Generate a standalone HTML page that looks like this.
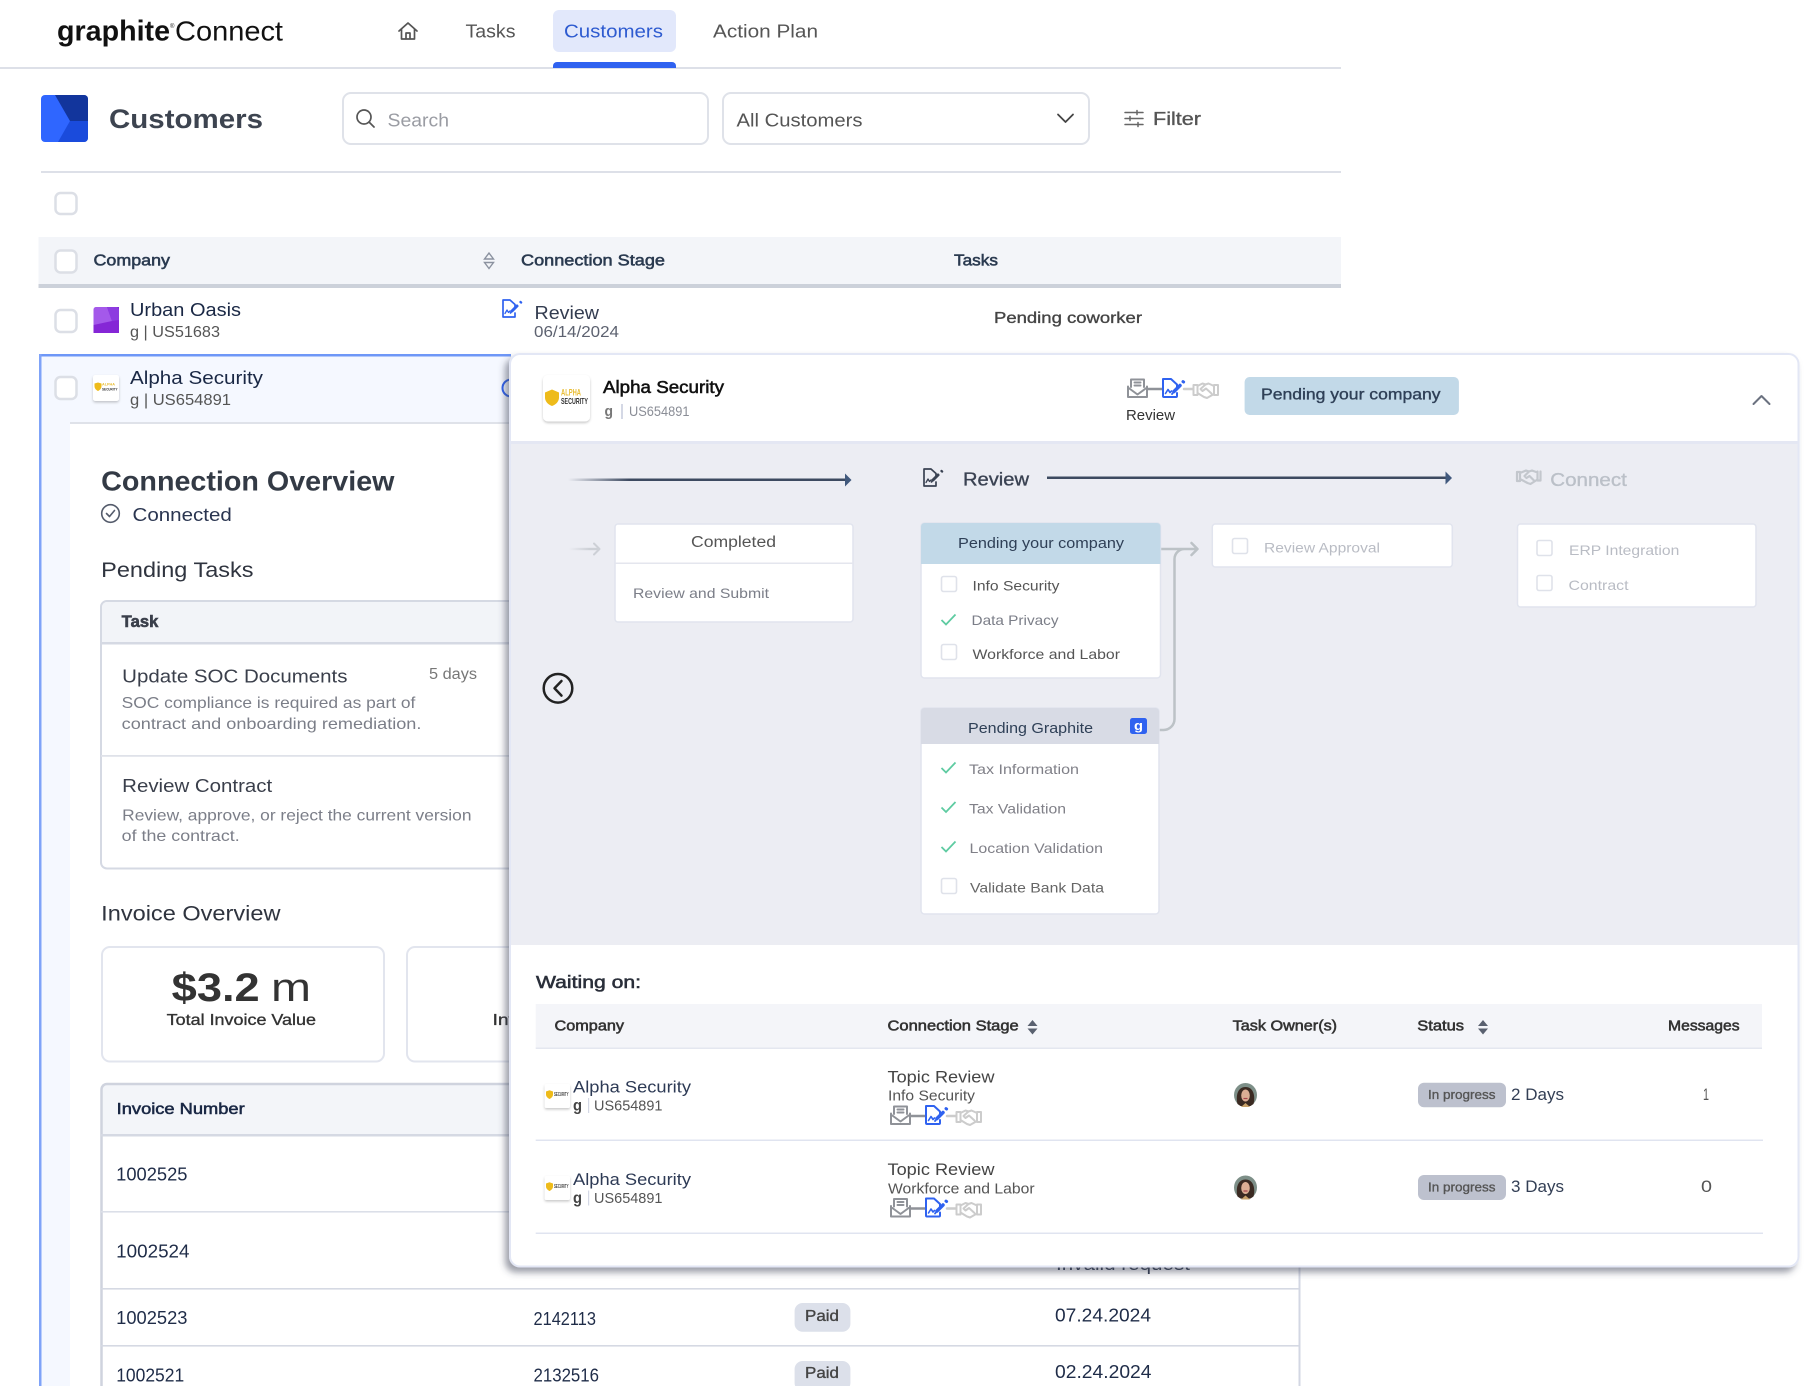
<!DOCTYPE html>
<html><head><meta charset="utf-8"><title>Customers</title>
<style>
html,body{margin:0;padding:0;background:#fff}
svg{display:block}
text{fill:currentColor;font-family:"Liberation Sans",sans-serif}
.m{stroke:currentColor;stroke-width:.35px}
.s{stroke:currentColor;stroke-width:.55px}
.cb{fill:#fff;stroke:#dfe2ea;stroke-width:1.6}
.ck{fill:none;stroke:#5ecba1;stroke-width:1.8}
.ln{fill:none;stroke-linecap:round;stroke-linejoin:round}
</style></head><body>
<svg width="1815" height="1386" viewBox="0 0 1815 1386" xmlns="http://www.w3.org/2000/svg">
<defs>
<linearGradient id="g1" x1="0" x2="1" y1="0" y2="0"><stop offset="0" stop-color="#3d4a60" stop-opacity="0"/><stop offset=".22" stop-color="#3d4a60"/><stop offset="1" stop-color="#3d4a60"/></linearGradient>
<linearGradient id="g2" x1="0" x2="1" y1="0" y2="0"><stop offset="0" stop-color="#cdd0d6" stop-opacity="0"/><stop offset=".7" stop-color="#cdd0d6"/></linearGradient>
<filter id="sh" x="-5%" y="-5%" width="110%" height="110%"><feDropShadow dx="-4" dy="5" stdDeviation="3.5" flood-color="#3a4255" flood-opacity=".5"/></filter>
<filter id="cs" x="-30%" y="-30%" width="160%" height="160%"><feDropShadow dx="0" dy="1.5" stdDeviation="1.2" flood-color="#000" flood-opacity=".22"/></filter>
</defs>
<rect width="1815" height="1386" fill="#fff"/>

<!-- NAV -->
<text x="57" y="40.5" font-size="29" font-weight="700" color="#111" textLength="113" lengthAdjust="spacingAndGlyphs">graphite</text>
<text x="170" y="28" font-size="6" color="#222">®</text>
<text x="175" y="40.5" font-size="28" color="#111" textLength="108" lengthAdjust="spacingAndGlyphs">Connect</text>
<g class="ln" stroke="#555" stroke-width="1.7" transform="translate(398,22)"><path d="M1 9 10 1l9 8M3.5 7v10h13V7M8 17v-6h4v6"/></g>
<text x="465.5" y="37.5" font-size="18.5" color="#555" textLength="50" lengthAdjust="spacingAndGlyphs">Tasks</text>
<rect x="553" y="10" width="123" height="42" rx="6" fill="#e2e8fb"/>
<text x="564" y="37.5" font-size="18.5" color="#2e5bd0" textLength="99" lengthAdjust="spacingAndGlyphs">Customers</text>
<text x="713" y="37.5" font-size="18.5" color="#555" textLength="105" lengthAdjust="spacingAndGlyphs">Action Plan</text>
<rect x="0" y="67" width="1341" height="2" fill="#dde0e8"/>
<path d="M553 68v-2a4 4 0 0 1 4-4h115a4 4 0 0 1 4 4v2z" fill="#2f62f0"/>

<!-- Title -->
<rect x="41" y="95" width="47" height="47" rx="4" fill="#2f66ff"/>
<path d="M55 95h29a4 4 0 0 1 4 4v22H70z" fill="#12359c"/>
<path d="M70 121h18v17a4 4 0 0 1-4 4H58z" fill="#1a4bdc"/>
<text x="109" y="128" font-size="27" font-weight="700" color="#3d4450" textLength="154" lengthAdjust="spacingAndGlyphs">Customers</text>
<rect x="343" y="93" width="365" height="51" rx="8" fill="#fff" stroke="#dfe2e9" stroke-width="2"/>
<g class="ln" stroke="#555" stroke-width="1.7"><circle cx="364" cy="117" r="7"/><path d="M369 122l5 5"/></g>
<text x="387.5" y="126.5" font-size="18.5" color="#9a9ca3" textLength="61.5" lengthAdjust="spacingAndGlyphs">Search</text>
<rect x="723" y="93" width="366" height="51" rx="8" fill="#fff" stroke="#dfe2e9" stroke-width="2"/>
<text x="736.500" y="126.5" font-size="18.5" color="#555" textLength="126" lengthAdjust="spacingAndGlyphs">All Customers</text>
<path class="ln" d="M1058 114.500l7.500 7.500 7.500-7.500" stroke="#444" stroke-width="1.8"/>
<g class="ln" stroke="#666" stroke-width="1.5"><path d="M1125 112.500h18M1125 118.500h18M1125 124.500h18"/><path d="M1137 110.500v4M1130 116.500v4M1138 122.500v4"/></g>
<text class="m" x="1153" y="124.800" font-size="18" color="#555" textLength="48" lengthAdjust="spacingAndGlyphs">Filter</text>
<rect x="41" y="171" width="1300" height="2" fill="#dde0e8"/>
<rect x="55.500" y="193" width="21" height="21" rx="5" fill="#fff" stroke="#dcdfe6" stroke-width="2.5"/>

<!-- table header -->
<rect x="38.500" y="237" width="1302.500" height="47" fill="#f3f5f9"/>
<rect x="38.500" y="284" width="1302.500" height="4" fill="#ccd1da"/>
<rect x="55.500" y="250.500" width="21" height="22" rx="5" fill="#fff" stroke="#dcdfe6" stroke-width="2.500"/>
<text class="s" x="93.500" y="265.500" font-size="16" color="#2a3a50" textLength="76.500" lengthAdjust="spacingAndGlyphs">Company</text>
<g fill="none" stroke="#8b92a0" stroke-width="1.400"><path d="M489 253l4.500 6h-9zM489 268.500l4.500-6h-9z"/></g>
<text class="s" x="521" y="265.500" font-size="16" color="#2a3a50" textLength="144" lengthAdjust="spacingAndGlyphs">Connection Stage</text>
<text class="s" x="954" y="265.500" font-size="16" color="#2a3a50" textLength="44" lengthAdjust="spacingAndGlyphs">Tasks</text>

<!-- Urban Oasis -->
<rect x="55.500" y="310" width="21" height="22" rx="5" fill="#fff" stroke="#dcdfe6" stroke-width="2.500"/>
<rect x="93.500" y="307" width="25.500" height="26" rx="2.500" fill="#a459ea"/>
<path d="M107 307h12v14h-7zM93.500 325l18.500-4h7v12H93.500z" fill="#8526d6"/>
<path d="M107 307h10l2 2v11l-7 1z" fill="#8d3ce0"/>
<text x="130" y="316" font-size="18.500" color="#1a2845" textLength="111" lengthAdjust="spacingAndGlyphs">Urban Oasis</text>
<text x="130" y="337" font-size="15.500" color="#555" textLength="90" lengthAdjust="spacingAndGlyphs">g | US51683</text>
<g class="ln" stroke="#2f62f0" stroke-width="1.700" transform="translate(502,299)"><path d="M1 1h7l5 4.500v2M13 14v4H1V1"/><path d="M3 14.500l2-3.500 1.500 2.500 1.500-1.500" stroke-width="1.300"/><path d="M10 12l5-5" stroke-width="3"/><path d="M8.500 14l.8-1"/><path d="M18.500 3l.6.5" stroke-width="2.400"/></g>
<text x="534.500" y="319" font-size="18.500" color="#333c50" textLength="64.500" lengthAdjust="spacingAndGlyphs">Review</text>
<text x="534" y="337" font-size="16" color="#5d6270" textLength="85" lengthAdjust="spacingAndGlyphs">06/14/2024</text>
<text class="m" x="994" y="323" font-size="16" color="#444" textLength="148" lengthAdjust="spacingAndGlyphs">Pending coworker</text>

<!-- Alpha row -->
<rect x="39" y="354" width="472" height="1032" fill="#f5f8ff"/>
<rect x="70" y="423" width="1229" height="963" fill="#fff"/>
<rect x="70" y="422" width="441" height="2" fill="#dfe2e9"/>
<rect x="39" y="354" width="472" height="2.500" fill="#6e97f7"/>
<rect x="39" y="354" width="2.500" height="1032" fill="#7fa3f8"/>
<rect x="55.500" y="377" width="21" height="22" rx="5" fill="#fff" stroke="#dcdfe6" stroke-width="2.500"/>
<rect x="93" y="375" width="26" height="26" rx="2.500" fill="#fff" filter="url(#cs)"/>
<path d="M94.500 383.500l3.500-1 3.500 1v2.500c0 2.500-1.500 4-3.500 5-2-1-3.500-2.500-3.500-5z" fill="#eebb1a"/>
<text x="102" y="385.500" font-size="4" font-weight="700" color="#e9bd33" textLength="13" lengthAdjust="spacingAndGlyphs">ALPHA</text>
<text x="102" y="390.500" font-size="4" font-weight="700" color="#333" textLength="15.500" lengthAdjust="spacingAndGlyphs">SECURITY</text>
<text x="130" y="384" font-size="18.500" color="#1a2845" textLength="133" lengthAdjust="spacingAndGlyphs">Alpha Security</text>
<text x="130" y="405" font-size="15.500" color="#555" textLength="101" lengthAdjust="spacingAndGlyphs">g | US654891</text>
<circle cx="511" cy="388" r="8.500" fill="none" stroke="#2f62f0" stroke-width="2"/>

<!-- Connection overview -->
<text x="101.200" y="490.500" font-size="28" font-weight="700" color="#333a45" textLength="293.300" lengthAdjust="spacingAndGlyphs">Connection Overview</text>
<circle cx="110.500" cy="513.500" r="8.800" fill="none" stroke="#555c6c" stroke-width="1.600"/>
<path class="ln" d="M106.500 513.500l3 3 5-6" stroke="#555c6c" stroke-width="1.600"/>
<text x="132.500" y="521" font-size="18.500" color="#2a3550" textLength="99.300" lengthAdjust="spacingAndGlyphs">Connected</text>
<text x="101.200" y="577" font-size="21" color="#2f343f" textLength="152.300" lengthAdjust="spacingAndGlyphs">Pending Tasks</text>

<rect x="101" y="601" width="600" height="267.500" rx="6" fill="#fff" stroke="#d5d9e3" stroke-width="2"/>
<path d="M102 642V607a5 5 0 0 1 5-5h594v40z" fill="#f2f4f8"/>
<rect x="101" y="642" width="600" height="2.500" fill="#d5d9e3"/>
<text class="s" x="121.700" y="627" font-size="16.500" font-weight="700" color="#3a3f4b" textLength="36.700" lengthAdjust="spacingAndGlyphs">Task</text>
<text x="122.200" y="682.500" font-size="18.500" color="#3a3f4b" textLength="225.300" lengthAdjust="spacingAndGlyphs">Update SOC Documents</text>
<text x="429" y="679" font-size="15.500" color="#777" textLength="48" lengthAdjust="spacingAndGlyphs">5 days</text>
<text x="121.700" y="708" font-size="16" color="#7b7e88" textLength="293.700" lengthAdjust="spacingAndGlyphs">SOC compliance is required as part of</text>
<text x="121.700" y="729" font-size="16" color="#7b7e88" textLength="299.700" lengthAdjust="spacingAndGlyphs">contract and onboarding remediation.</text>
<rect x="101" y="755" width="600" height="1.800" fill="#dfe2e9"/>
<text x="122.200" y="792" font-size="18.500" color="#3a3f4b" textLength="150" lengthAdjust="spacingAndGlyphs">Review Contract</text>
<text x="122.200" y="820.700" font-size="16" color="#7b7e88" textLength="349.300" lengthAdjust="spacingAndGlyphs">Review, approve, or reject the current version</text>
<text x="121.700" y="841" font-size="16" color="#7b7e88" textLength="118" lengthAdjust="spacingAndGlyphs">of the contract.</text>

<text x="101.200" y="920.700" font-size="21" color="#2f343f" textLength="179.300" lengthAdjust="spacingAndGlyphs">Invoice Overview</text>
<rect x="102" y="947" width="282" height="114.500" rx="8" fill="#fff" stroke="#e2e5ee" stroke-width="2"/>
<text x="171.700" y="1001" font-size="40" font-weight="700" color="#333" textLength="88" lengthAdjust="spacingAndGlyphs">$3.2</text>
<text x="271" y="1001" font-size="40" color="#333" textLength="40" lengthAdjust="spacingAndGlyphs">m</text>
<text class="m" x="166.700" y="1025" font-size="16" color="#333" textLength="149.300" lengthAdjust="spacingAndGlyphs">Total Invoice Value</text>
<rect x="407" y="947" width="300" height="114.500" rx="8" fill="#fff" stroke="#e2e5ee" stroke-width="2"/>
<text class="m" x="492.700" y="1025" font-size="16" color="#333" textLength="60" lengthAdjust="spacingAndGlyphs">Invoice</text>

<!-- Invoice table -->
<rect x="102" y="1084" width="1197" height="51" fill="#f3f5f9"/>
<path d="M1299 1084H107a5.500 5.500 0 0 0-5.500 5.500V1386" fill="none" stroke="#cfd3de" stroke-width="2.500"/>
<rect x="101" y="1134" width="1198" height="2.500" fill="#d5d9e3"/>
<rect x="1298.500" y="1084" width="2" height="302" fill="#d3d7e3"/>
<text class="s" x="116.700" y="1114" font-size="16" color="#1a2845" textLength="128" lengthAdjust="spacingAndGlyphs">Invoice Number</text>
<text x="116.200" y="1180.500" font-size="18" color="#1f2c48" textLength="71.300" lengthAdjust="spacingAndGlyphs">1002525</text>
<rect x="101" y="1211" width="1198" height="1.600" fill="#dbdfe8"/>
<text x="116.200" y="1257.500" font-size="18" color="#1f2c48" textLength="73.300" lengthAdjust="spacingAndGlyphs">1002524</text>
<text x="1056" y="1270" font-size="18" color="#333c50" textLength="134" lengthAdjust="spacingAndGlyphs">Invalid request</text>
<rect x="101" y="1288" width="1198" height="1.600" fill="#d5d9e3"/>
<text x="116.200" y="1324" font-size="18" color="#1f2c48" textLength="71.300" lengthAdjust="spacingAndGlyphs">1002523</text>
<text x="533.500" y="1325" font-size="18" color="#1f2c48" textLength="62.500" lengthAdjust="spacingAndGlyphs">2142113</text>
<rect x="794.600" y="1303" width="55.800" height="28.700" rx="8" fill="#dce0ea"/>
<text class="m" x="805" y="1321" font-size="15.500" color="#444" textLength="34" lengthAdjust="spacingAndGlyphs">Paid</text>
<text x="1055" y="1321.700" font-size="18" color="#1f2c48" textLength="96" lengthAdjust="spacingAndGlyphs">07.24.2024</text>
<rect x="101" y="1345" width="1198" height="1.600" fill="#d5d9e3"/>
<text x="116.200" y="1381.700" font-size="18" color="#1f2c48" textLength="68" lengthAdjust="spacingAndGlyphs">1002521</text>
<text x="533.500" y="1381.700" font-size="18" color="#1f2c48" textLength="65.500" lengthAdjust="spacingAndGlyphs">2132516</text>
<rect x="794.600" y="1361" width="55.800" height="30" rx="8" fill="#dce0ea"/>
<text class="m" x="805" y="1378" font-size="15.500" color="#444" textLength="34" lengthAdjust="spacingAndGlyphs">Paid</text>
<text x="1055" y="1378" font-size="18" color="#1f2c48" textLength="96.500" lengthAdjust="spacingAndGlyphs">02.24.2024</text>

<!-- PANEL -->
<rect x="510" y="354" width="1288.500" height="912.500" rx="10" fill="#fff" stroke="#e3e7f5" stroke-width="2" filter="url(#sh)"/>
<rect x="511" y="441" width="1286.500" height="3" fill="#e4e7f3"/>
<rect x="511" y="444" width="1286.500" height="501" fill="#ecedf3"/>

<!-- panel header -->
<rect x="543" y="375" width="47" height="46.500" rx="5" fill="#fff" filter="url(#cs)"/>
<path d="M545 392.500l7-3 7 3v5c0 4-3 7-7 8.500-4-1.500-7-4.500-7-8.500z" fill="#eebb1a"/>
<text x="561" y="395.500" font-size="9" font-weight="700" color="#e9bd33" textLength="20" lengthAdjust="spacingAndGlyphs">ALPHA</text>
<text x="561" y="404" font-size="8.500" font-weight="700" color="#333" textLength="27" lengthAdjust="spacingAndGlyphs">SECURITY</text>
<text class="s" x="603" y="393" font-size="17.500" color="#111" textLength="121" lengthAdjust="spacingAndGlyphs">Alpha Security</text>
<text x="604.500" y="416" font-size="15" font-weight="700" color="#777" textLength="8.500" lengthAdjust="spacingAndGlyphs">g</text>
<rect x="621" y="404" width="2" height="15" fill="#d4d8e5"/>
<text x="629" y="416" font-size="14" color="#8a8d96" textLength="60.500" lengthAdjust="spacingAndGlyphs">US654891</text>

<g class="ln" transform="translate(1127,378)">
<path d="M4 9V1.500h13V9M7.500 4.500h6M7.500 7.500h6M1 8.500V19h19V8.500M1 9.500l9.500 7 9.500-7" stroke="#8f9298" stroke-width="2"/>
<path d="M21 11h14" stroke="#8f9298" stroke-width="2.500"/>
<path d="M36 1h8l6 5.500V9M50 15v3a1 1 0 0 1-1 1H37a1 1 0 0 1-1-1V1" stroke="#2f62f0" stroke-width="2"/>
<path d="M38.500 15.500l2.500-4 2 3 1.500-1.500" stroke="#2f62f0" stroke-width="1.600"/>
<path d="M47 13.500l6-6" stroke="#2f62f0" stroke-width="3.500"/><path d="M45 16l1-1.200" stroke="#2f62f0" stroke-width="1.800"/><path d="M56 3.600l.6.4" stroke="#2f62f0" stroke-width="3"/>
<path d="M57 11h9" stroke="#ccc" stroke-width="2.500"/>
<path d="M66.500 7h4v10h-4zM87 7h4v10h-4zM70.500 8l5-2.500 3 1 3-1L87 8v8l-7 4-3-1-6.500-4zM78.500 6.500l-5 4.500 2 2 3.500-2.500 5.500 5" stroke="#ccc" stroke-width="2"/>
</g>
<text x="1126" y="420" font-size="14.500" color="#333" textLength="49" lengthAdjust="spacingAndGlyphs">Review</text>
<rect x="1244.600" y="377" width="214.300" height="38" rx="5" fill="#c2d9e8"/>
<text class="m" x="1261" y="399.500" font-size="15.500" color="#2f4057" textLength="179.500" lengthAdjust="spacingAndGlyphs">Pending your company</text>
<path class="ln" d="M1753.500 404l8-8 8 8" stroke="#6b7280" stroke-width="2"/>

<!-- stages -->
<rect x="568" y="478.500" width="278" height="2.500" fill="url(#g1)"/>
<path d="M845 473.500l6.500 6.500-6.500 6.500z" fill="#41597d"/>
<g class="ln" stroke="#3a4252" stroke-width="1.700" transform="translate(923,468)"><path d="M1 1h7l5 4.500v2M13 14v4H1V1"/><path d="M3 14.500l2-3.500 1.500 2.500 1.500-1.500" stroke-width="1.300"/><path d="M10 12l5-5" stroke-width="3"/><path d="M8.500 14l.8-1"/><path d="M18.500 3l.6.5" stroke-width="2.400"/></g>
<text class="m" x="963" y="485.700" font-size="18" color="#3a4252" textLength="66" lengthAdjust="spacingAndGlyphs">Review</text>
<rect x="1047" y="476.500" width="399.500" height="2.500" fill="#3d4a60"/>
<path d="M1445.500 471.500l6.500 6.500-6.500 6.500z" fill="#41597d"/>
<g class="ln" transform="translate(1516.500,469)" stroke="#c3c7cd" stroke-width="2.200"><path d="M0.500 3v9h3V3zM24 2.500v9h-3V2.500M3.500 4l6-2.500 3 1 3-1L21 3.500v7L14 15l-3-1-7.500-4zM12.500 2.500L8 7l2 2 3-2 4.500 4.500"/></g>
<text class="m" x="1550.300" y="486" font-size="18" color="#bbc0c8" textLength="76.500" lengthAdjust="spacingAndGlyphs">Connect</text>

<!-- light arrow + Completed -->
<rect x="569" y="547.800" width="29" height="2.400" fill="url(#g2)"/>
<path class="ln" d="M594 543.500l5.500 5.500-5.500 5.500" stroke="#cdd0d6" stroke-width="2"/>
<rect x="615" y="524" width="238" height="98" rx="3" fill="#fff" stroke="#e1e4ee" stroke-width="1.500"/>
<rect x="615" y="562.500" width="238" height="1.500" fill="#e4e6ee"/>
<text x="691" y="547" font-size="15.500" color="#555" textLength="85" lengthAdjust="spacingAndGlyphs">Completed</text>
<text x="633" y="598" font-size="14" color="#7b7e88" textLength="136" lengthAdjust="spacingAndGlyphs">Review and Submit</text>

<!-- Connectors -->
<path class="ln" d="M1160 549h37M1191.500 543l6 6-6 6M1184.500 549a10 10 0 0 0-10 10v160a11 11 0 0 1-11 11h-4" stroke="#bcc2c6" stroke-width="2.500"/>

<!-- Pending your company -->
<rect x="921" y="523" width="239.500" height="155" rx="3.500" fill="#fff" stroke="#e1e4ee" stroke-width="1.500"/>
<path d="M921 564v-37.500a3.500 3.500 0 0 1 3.500-3.500h232.500a3.500 3.500 0 0 1 3.500 3.500V564z" fill="#c2d9e8"/>
<text x="958" y="548" font-size="14.500" color="#2f4057" textLength="166" lengthAdjust="spacingAndGlyphs">Pending your company</text>
<rect class="cb" x="941.500" y="576.500" width="15" height="15" rx="2"/>
<text x="972.500" y="590.700" font-size="14" color="#555" textLength="87" lengthAdjust="spacingAndGlyphs">Info Security</text>
<path class="ck" d="M941.500 620l4.500 4.500 9.500-10"/>
<text x="971.500" y="625" font-size="14" color="#7b7e88" textLength="87" lengthAdjust="spacingAndGlyphs">Data Privacy</text>
<rect class="cb" x="941.500" y="644.500" width="15" height="15" rx="2"/>
<text x="972.500" y="659" font-size="14" color="#555" textLength="147.500" lengthAdjust="spacingAndGlyphs">Workforce and Labor</text>

<!-- Pending Graphite -->
<rect x="921" y="708" width="238" height="206" rx="3.500" fill="#fff" stroke="#e1e4ee" stroke-width="1.500"/>
<path d="M921 744v-32.500a3.500 3.500 0 0 1 3.500-3.500h231a3.500 3.500 0 0 1 3.500 3.500V744z" fill="#d8dbe5"/>
<text x="968" y="733" font-size="14.500" color="#2f4057" textLength="125" lengthAdjust="spacingAndGlyphs">Pending Graphite</text>
<rect x="1130" y="718" width="17" height="16" rx="2.500" fill="#2f62f0"/>
<text x="1134" y="730" font-size="13" font-weight="700" color="#fff" textLength="9" lengthAdjust="spacingAndGlyphs">g</text>
<path class="ck" d="M941.500 768l4.500 4.500 9.500-10"/>
<text x="969" y="774" font-size="14" color="#808088" textLength="110" lengthAdjust="spacingAndGlyphs">Tax Information</text>
<path class="ck" d="M941.500 807.500l4.500 4.500 9.500-10"/>
<text x="969" y="813.700" font-size="14" color="#808088" textLength="97" lengthAdjust="spacingAndGlyphs">Tax Validation</text>
<path class="ck" d="M941.500 847l4.500 4.500 9.500-10"/>
<text x="969.500" y="853" font-size="14" color="#808088" textLength="133.500" lengthAdjust="spacingAndGlyphs">Location Validation</text>
<rect class="cb" x="941.500" y="878.500" width="15" height="15" rx="2"/>
<text x="970" y="892.700" font-size="14" color="#666" textLength="134" lengthAdjust="spacingAndGlyphs">Validate Bank Data</text>

<!-- Review Approval -->
<rect x="1212.300" y="524" width="240" height="43" rx="3" fill="#fff" stroke="#e1e4ee" stroke-width="1.500"/>
<rect class="cb" x="1232.500" y="538.500" width="15" height="15" rx="2"/>
<text x="1264" y="552.700" font-size="14" color="#b9bcc4" textLength="116" lengthAdjust="spacingAndGlyphs">Review Approval</text>

<!-- Connect card -->
<rect x="1517.500" y="524" width="238.500" height="83" rx="3" fill="#fff" stroke="#e1e4ee" stroke-width="1.500"/>
<rect class="cb" x="1537" y="540.500" width="15" height="15" rx="2"/>
<text x="1569" y="555" font-size="14" color="#b9bcc4" textLength="110.300" lengthAdjust="spacingAndGlyphs">ERP Integration</text>
<rect class="cb" x="1537" y="575.500" width="15" height="15" rx="2"/>
<text x="1568.500" y="590" font-size="14" color="#b9bcc4" textLength="60" lengthAdjust="spacingAndGlyphs">Contract</text>

<!-- back -->
<circle cx="558" cy="688.300" r="14.300" fill="none" stroke="#222" stroke-width="2.500"/>
<path class="ln" d="M561.500 681l-7 7.300 7 7.300" stroke="#222" stroke-width="2.500"/>

<!-- Waiting on -->
<text class="s" x="536" y="988" font-size="17.500" color="#2a2f3a" textLength="105" lengthAdjust="spacingAndGlyphs">Waiting on:</text>
<rect x="535.700" y="1004" width="1226.300" height="44" fill="#f4f5f9"/>
<rect x="535.700" y="1047.500" width="1226.300" height="1.500" fill="#e4e7f0"/>
<text class="s" x="554.500" y="1030.700" font-size="14.500" color="#333" textLength="69.500" lengthAdjust="spacingAndGlyphs">Company</text>
<text class="s" x="887.500" y="1030.700" font-size="14.500" color="#333" textLength="131.200" lengthAdjust="spacingAndGlyphs">Connection Stage</text>
<path d="M1032.500 1020l5 6h-10zM1032.500 1034.500l5-6h-10z" fill="#5a6170"/>
<text class="s" x="1232.700" y="1030.700" font-size="14.500" color="#333" textLength="104.400" lengthAdjust="spacingAndGlyphs">Task Owner(s)</text>
<text class="s" x="1417.300" y="1030.700" font-size="14.500" color="#333" textLength="46.700" lengthAdjust="spacingAndGlyphs">Status</text>
<path d="M1483 1020l5 6h-10zM1483 1034.500l5-6h-10z" fill="#5a6170"/>
<text class="s" x="1668" y="1030.700" font-size="14.500" color="#333" textLength="71.600" lengthAdjust="spacingAndGlyphs">Messages</text>

<!-- Row 1 -->
<rect x="544.600" y="1084" width="25.400" height="24" rx="2" fill="#fff" filter="url(#cs)"/>
<path d="M546 1091.500l3.500-1.200 3.500 1.200v3c0 2-1.500 3.500-3.500 4.500-2-1-3.500-2.500-3.500-4.500z" fill="#eebb1a"/>
<text x="554" y="1096" font-size="5" font-weight="700" color="#444" textLength="14.500" lengthAdjust="spacingAndGlyphs">SECURITY</text>
<text x="573" y="1092.700" font-size="17" color="#2d3a55" textLength="118" lengthAdjust="spacingAndGlyphs">Alpha Security</text>
<text x="573" y="1110.700" font-size="15.500" font-weight="700" color="#444" textLength="9" lengthAdjust="spacingAndGlyphs">g</text>
<rect x="588" y="1098" width="1.200" height="15" fill="#d4d8e5"/>
<text x="594" y="1110.700" font-size="15" color="#555" textLength="68.500" lengthAdjust="spacingAndGlyphs">US654891</text>
<text x="887.500" y="1082.700" font-size="17" color="#444" textLength="107" lengthAdjust="spacingAndGlyphs">Topic Review</text>
<text x="888" y="1100.700" font-size="14.500" color="#555" textLength="87" lengthAdjust="spacingAndGlyphs">Info Security</text>
<g class="ln" transform="translate(890,1105)">
<path d="M4 9V1.500h13V9M7.500 4.500h6M7.500 7.500h6M1 8.500V19h19V8.500M1 9.500l9.500 7 9.500-7" stroke="#8f9298" stroke-width="2"/>
<path d="M21 11h14" stroke="#8f9298" stroke-width="2.500"/>
<path d="M36 1h8l6 5.500V9M50 15v3a1 1 0 0 1-1 1H37a1 1 0 0 1-1-1V1" stroke="#2f62f0" stroke-width="2"/>
<path d="M38.500 15.500l2.500-4 2 3 1.500-1.500" stroke="#2f62f0" stroke-width="1.600"/>
<path d="M47 13.500l6-6" stroke="#2f62f0" stroke-width="3.500"/><path d="M45 16l1-1.200" stroke="#2f62f0" stroke-width="1.800"/><path d="M56 3.600l.6.4" stroke="#2f62f0" stroke-width="3"/>
<path d="M57 11h9" stroke="#ccc" stroke-width="2.500"/>
<path d="M66.500 7h4v10h-4zM87 7h4v10h-4zM70.500 8l5-2.500 3 1 3-1L87 8v8l-7 4-3-1-6.500-4zM78.500 6.500l-5 4.500 2 2 3.500-2.500 5.500 5" stroke="#ccc" stroke-width="2"/>
</g>
<g>
<ellipse cx="1245.500" cy="1095" rx="11.500" ry="12" fill="#7d8f88"/>
<path d="M1237.500 1104c-2-8 0-17 8-17s10 9 8 17l-3 2h-10z" fill="#3b2a22"/>
<ellipse cx="1245.500" cy="1095.500" rx="4.300" ry="6" fill="#dcae94"/>
<path d="M1243.500 1098.500h4" stroke="#a8434a" stroke-width="1.200"/>
<path d="M1241 1107l4.500-4 4.500 4z" fill="#c9a26a"/>
</g>
<rect x="1418" y="1082.700" width="88" height="24.500" rx="6" fill="#bdc1ce"/>
<text class="m" x="1428" y="1099" font-size="13" color="#555" textLength="67.500" lengthAdjust="spacingAndGlyphs">In progress</text>
<text x="1511" y="1100" font-size="17" color="#333f55" textLength="53" lengthAdjust="spacingAndGlyphs">2 Days</text>
<text x="1703" y="1100" font-size="17" color="#555" textLength="6" lengthAdjust="spacingAndGlyphs">1</text>
<rect x="535.700" y="1139.500" width="1227.300" height="1.500" fill="#e0e4f0"/>

<!-- Row 2 -->
<rect x="544.600" y="1176" width="25.400" height="24" rx="2" fill="#fff" filter="url(#cs)"/>
<path d="M546 1183.500l3.500-1.200 3.500 1.200v3c0 2-1.500 3.500-3.500 4.500-2-1-3.500-2.500-3.500-4.500z" fill="#eebb1a"/>
<text x="554" y="1188" font-size="5" font-weight="700" color="#444" textLength="14.500" lengthAdjust="spacingAndGlyphs">SECURITY</text>
<text x="573" y="1185" font-size="17" color="#2d3a55" textLength="118" lengthAdjust="spacingAndGlyphs">Alpha Security</text>
<text x="573" y="1203" font-size="15.500" font-weight="700" color="#444" textLength="9" lengthAdjust="spacingAndGlyphs">g</text>
<rect x="588" y="1190.500" width="1.200" height="15" fill="#d4d8e5"/>
<text x="594" y="1203" font-size="15" color="#555" textLength="68.500" lengthAdjust="spacingAndGlyphs">US654891</text>
<text x="887.500" y="1175" font-size="17" color="#444" textLength="107" lengthAdjust="spacingAndGlyphs">Topic Review</text>
<text x="888" y="1193.300" font-size="14.500" color="#555" textLength="146.600" lengthAdjust="spacingAndGlyphs">Workforce and Labor</text>
<g class="ln" transform="translate(890,1197.500)">
<path d="M4 9V1.500h13V9M7.500 4.500h6M7.500 7.500h6M1 8.500V19h19V8.500M1 9.500l9.500 7 9.500-7" stroke="#8f9298" stroke-width="2"/>
<path d="M21 11h14" stroke="#8f9298" stroke-width="2.500"/>
<path d="M36 1h8l6 5.500V9M50 15v3a1 1 0 0 1-1 1H37a1 1 0 0 1-1-1V1" stroke="#2f62f0" stroke-width="2"/>
<path d="M38.500 15.500l2.500-4 2 3 1.500-1.500" stroke="#2f62f0" stroke-width="1.600"/>
<path d="M47 13.500l6-6" stroke="#2f62f0" stroke-width="3.500"/><path d="M45 16l1-1.200" stroke="#2f62f0" stroke-width="1.800"/><path d="M56 3.600l.6.4" stroke="#2f62f0" stroke-width="3"/>
<path d="M57 11h9" stroke="#ccc" stroke-width="2.500"/>
<path d="M66.500 7h4v10h-4zM87 7h4v10h-4zM70.500 8l5-2.500 3 1 3-1L87 8v8l-7 4-3-1-6.500-4zM78.500 6.500l-5 4.500 2 2 3.500-2.500 5.500 5" stroke="#ccc" stroke-width="2"/>
</g>
<g>
<ellipse cx="1245.500" cy="1187.500" rx="11.500" ry="12" fill="#7d8f88"/>
<path d="M1237.500 1196.500c-2-8 0-17 8-17s10 9 8 17l-3 2h-10z" fill="#3b2a22"/>
<ellipse cx="1245.500" cy="1188" rx="4.300" ry="6" fill="#dcae94"/>
<path d="M1243.500 1191h4" stroke="#a8434a" stroke-width="1.200"/>
<path d="M1241 1199.500l4.500-4 4.500 4z" fill="#c9a26a"/>
</g>
<rect x="1418" y="1175" width="88" height="25" rx="6" fill="#bdc1ce"/>
<text class="m" x="1428" y="1191.500" font-size="13" color="#555" textLength="67.500" lengthAdjust="spacingAndGlyphs">In progress</text>
<text x="1511" y="1192" font-size="17" color="#333f55" textLength="53" lengthAdjust="spacingAndGlyphs">3 Days</text>
<text x="1701" y="1192" font-size="17" color="#555" textLength="11" lengthAdjust="spacingAndGlyphs">0</text>
<rect x="535.700" y="1232.500" width="1227.300" height="1.500" fill="#e0e4f0"/>
</svg>
</body></html>
